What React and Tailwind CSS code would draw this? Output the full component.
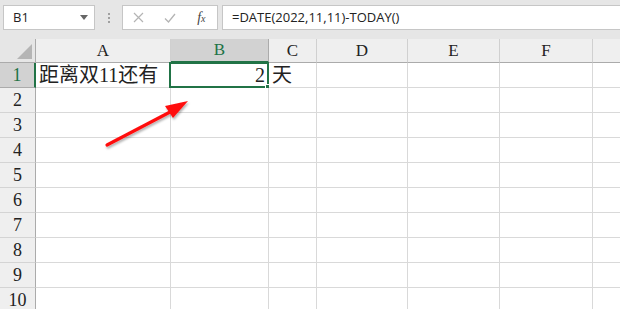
const cols = [
  { key: 'A', w: 'w-[135px]' },
  { key: 'B', w: 'w-[98px]' },
  { key: 'C', w: 'w-[48px]' },
  { key: 'D', w: 'w-[91px]' },
  { key: 'E', w: 'w-[92px]' },
  { key: 'F', w: 'w-[93px]' },
  { key: 'G', w: 'w-[100px]' },
];

const rows = [1, 2, 3, 4, 5, 6, 7, 8, 9, 10];

const serif = { fontFamily: '"Liberation Serif", "Noto Sans CJK SC", serif' };

const FormulaBar = () => (
  <div className="h-[39px] bg-[#e6e6e6] flex items-start pt-[5px] pl-[3px] gap-0" style={{ fontFamily: '"Open Sans", "Liberation Sans", sans-serif' }}>
    {/* Name box */}
    <div className="w-[92px] h-[25px] bg-white border border-[#c6c6c6] flex items-center justify-between pl-[9px] pr-[6px] text-[13px] text-[#222]">
      <span>B1</span>
      <svg width="8" height="5" viewBox="0 0 8 5"><path d="M0 0h8L4 5z" fill="#666" /></svg>
    </div>
    {/* dots */}
    <div className="w-[27px] h-[25px] flex flex-col items-center justify-center gap-[2px]">
      <span className="w-[2px] h-[2px] bg-[#a0a0a0]" />
      <span className="w-[2px] h-[2px] bg-[#a0a0a0]" />
      <span className="w-[2px] h-[2px] bg-[#a0a0a0]" />
    </div>
    {/* icons */}
    <div className="w-[96px] h-[25px] bg-white border border-[#c6c6c6] flex items-center">
      <div className="w-[32px] flex justify-center">
        <svg width="11" height="11" viewBox="0 0 11 11"><path d="M1 1l9 9M10 1l-9 9" stroke="#b4b4b4" strokeWidth="1.2" /></svg>
      </div>
      <div className="w-[32px] flex justify-center">
        <svg width="12" height="10" viewBox="0 0 12 10"><path d="M1 5.5l3.5 3.5L11 1" stroke="#b4b4b4" strokeWidth="1.3" fill="none" /></svg>
      </div>
      <div className="w-[32px] flex justify-center">
        <span className="italic text-[14px] text-[#444]" style={serif}>f<span className="text-[10px]">x</span></span>
      </div>
    </div>
    <div className="ml-[4px] flex-1 h-[25px] bg-white border border-[#c6c6c6] border-r-0 flex items-center pl-[9px] text-[13px] text-[#222]">
      =DATE(2022,11,11)-TODAY()
    </div>
  </div>
);

const Sheet = () => (
  <div className="flex flex-col" style={serif}>
    {/* header row */}
    <div className="flex h-[24px]">
      <div className="w-[36px] shrink-0 bg-[#e6e6e6] border-r border-b border-[#ababab] relative">
        <svg className="absolute right-[3px] bottom-[3px]" width="15" height="15" viewBox="0 0 15 15"><path d="M15 0V15H0z" fill="#b5b5b5" /></svg>
      </div>
      {cols.map((c) => (
        <div
          key={c.key}
          className={`${c.w} shrink-0 flex items-center justify-center text-[17px] border-r border-b ${
            c.key === 'B'
              ? 'bg-[#d2d2d2] text-[#217346] border-r-[#ababab] border-b-2 border-b-[#217346]'
              : 'bg-[#efefef] text-[#222] border-[#ababab] border-r-[#d0d0d0]'
          }`}
        >
          {c.key === 'G' ? '' : c.key}
        </div>
      ))}
    </div>
    {rows.map((r) => (
      <div key={r} className="flex h-[25px]">
        <div
          className={`w-[36px] shrink-0 flex items-center justify-center text-[18px] border-b ${
            r === 1
              ? 'bg-[#d2d2d2] text-[#217346] border-r-2 border-r-[#217346] border-b-[#ababab]'
              : 'bg-[#efefef] text-[#222] border-r border-[#ababab] border-b-[#d4d4d4]'
          }`}
        >
          {r}
        </div>
        {cols.map((c) => (
          <div key={c.key} className={`${c.w} shrink-0 bg-white border-r border-b border-[#d9d9d9] relative flex items-center text-[20px] text-[#222]`}>
            {r === 1 && c.key === 'A' && <span className="pl-[3px] whitespace-nowrap">距离双11还有</span>}
            {r === 1 && c.key === 'B' && (
              <>
                <span className="ml-auto pr-[3px]">2</span>
                <div className="absolute -left-[2px] -top-[1px] -right-px -bottom-px border-2 border-[#217346]" />
                <div className="absolute -right-[3px] -bottom-[3px] w-[6px] h-[6px] bg-[#217346] border border-white" />
              </>
            )}
            {r === 1 && c.key === 'C' && <span className="pl-[3px] whitespace-nowrap">天</span>}
          </div>
        ))}
      </div>
    ))}
  </div>
);

const Arrow = () => (
  <svg className="absolute left-0 top-0 pointer-events-none" width="620" height="309" viewBox="0 0 620 309">
    <defs>
      <filter id="sh" x="-20%" y="-20%" width="140%" height="140%">
        <feDropShadow dx="1" dy="2" stdDeviation="1.2" floodColor="#000" floodOpacity="0.3" />
      </filter>
    </defs>
    <g filter="url(#sh)">
      <path d="M107 145L172 111" stroke="#ff1010" strokeWidth="3.2" strokeLinecap="round" />
      <path d="M188 101L165 106L173 118z" fill="#ff1010" />
    </g>
  </svg>
);

export default function App() {
  return (
    <div className="w-[620px] h-[309px] overflow-hidden relative bg-white">
      <FormulaBar />
      <Sheet />
      <Arrow />
    </div>
  );
}
